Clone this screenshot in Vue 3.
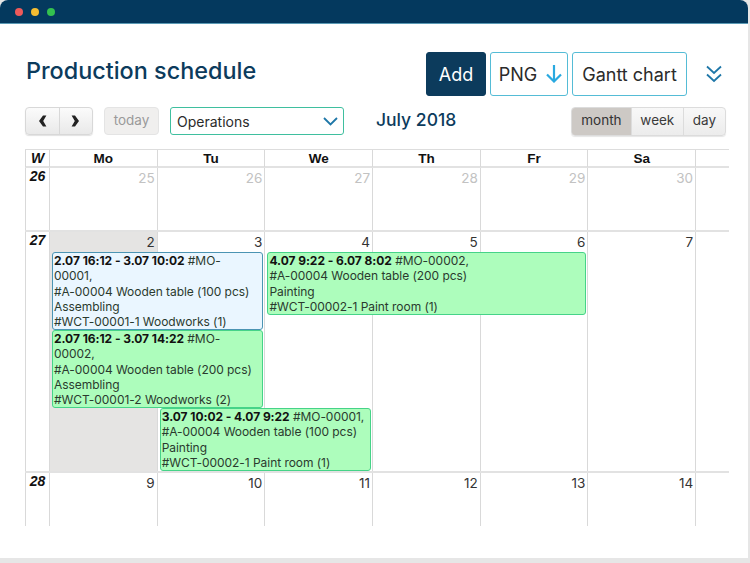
<script setup>
const days = ["Mo", "Tu", "We", "Th", "Fr", "Sa"];
const week26 = ["25", "26", "27", "28", "29", "30"];
const week27 = ["2", "3", "4", "5", "6", "7"];
const week28 = ["9", "10", "11", "12", "13", "14"];

const events = [
  {
    time: "2.07 16:12 - 3.07 10:02",
    order: "#MO-00001,",
    lines: ["#A-00004 Wooden table (100 pcs)", "Assembling", "#WCT-00001-1 Woodworks (1)"],
    cls: "ev-a",
  },
  {
    time: "4.07 9:22 - 6.07 8:02",
    order: "#MO-00002,",
    lines: ["#A-00004 Wooden table (200 pcs)", "Painting", "#WCT-00002-1 Paint room (1)"],
    cls: "ev-b",
  },
  {
    time: "2.07 16:12 - 3.07 14:22",
    order: "#MO-00002,",
    lines: ["#A-00004 Wooden table (200 pcs)", "Assembling", "#WCT-00001-2 Woodworks (2)"],
    cls: "ev-c",
  },
  {
    time: "3.07 10:02 - 4.07 9:22",
    order: "#MO-00001,",
    lines: ["#A-00004 Wooden table (100 pcs)", "Painting", "#WCT-00002-1 Paint room (1)"],
    cls: "ev-d",
  },
];
</script>

<template>
  <div class="page">
    <div class="window">
      <div class="titlebar">
        <span class="dot red"></span>
        <span class="dot yellow"></span>
        <span class="dot green"></span>
      </div>

      <div class="content">
        <div class="head">
          <h1>Production schedule</h1>
          <div class="actions">
            <button class="btn add">Add</button>
            <button class="btn png">
              PNG
              <svg width="16" height="18" viewBox="0 0 16 18" fill="none" stroke="#29a9e0" stroke-width="2.2">
                <path d="M8 0v16.500M1 9.500l7 7 7-7" />
              </svg>
            </button>
            <button class="btn gantt">Gantt chart</button>
            <svg class="collapse" width="16" height="18" viewBox="0 0 16 18" fill="none" stroke="#1f77a8" stroke-width="1.8">
              <path d="M1 1.500 8 8l7-6.500M1 9.500 8 16l7-6.500" />
            </svg>
          </div>
        </div>

        <div class="toolbar">
          <div class="pager">
            <button class="pg">
              <svg width="9" height="12" viewBox="0 0 9 12"><path d="M5 0.500h3.400L5.200 6l3.200 5.500H5L1 6z" fill="#222" /></svg>
            </button>
            <button class="pg">
              <svg width="9" height="12" viewBox="0 0 9 12"><path d="M4 0.500H0.600L3.800 6 0.600 11.500H4L8 6z" fill="#222" /></svg>
            </button>
          </div>
          <button class="today">today</button>
          <div class="select">
            <span>Operations</span>
            <svg width="15" height="9" viewBox="0 0 15 9" fill="none" stroke="#1f77a8" stroke-width="1.800">
              <path d="M1 1l6.500 6.500L14 1" />
            </svg>
          </div>
          <div class="month">July 2018</div>
          <div class="views">
            <span class="view active">month</span>
            <span class="view">week</span>
            <span class="view">day</span>
          </div>
        </div>

        <div class="calendar">
          <div class="row header">
            <div class="cell wk">W</div>
            <div v-for="d in days" :key="d" class="cell">{{ d }}</div>
            <div class="cell last"></div>
          </div>

          <div class="row r26">
            <div class="cell wk">26</div>
            <div v-for="d in week26" :key="d" class="cell num muted">{{ d }}</div>
            <div class="cell last"></div>
          </div>

          <div class="row r27">
            <div class="cell wk span">27</div>
            <div class="cell span today-bg"></div>
            <div v-for="n in 5" :key="n" class="cell span" :style="{ gridColumn: n + 2 }"></div>
            <div class="cell span last"></div>
            <div
              v-for="(d, i) in week27"
              :key="d"
              class="num date"
              :style="{ gridColumn: i + 2 }"
            >{{ d }}</div>
            <div v-for="e in events" :key="e.time" class="event" :class="e.cls">
              <b>{{ e.time }}</b> {{ e.order }}
              <div v-for="l in e.lines" :key="l">{{ l }}</div>
            </div>
          </div>

          <div class="row r28">
            <div class="cell wk">28</div>
            <div v-for="d in week28" :key="d" class="cell num">{{ d }}</div>
            <div class="cell last"></div>
          </div>
        </div>
      </div>
    </div>
  </div>
</template>

<style scoped>
.page {
  width: 750px;
  height: 563px;
  background: #e6e6e6;
  overflow: hidden;
  font-family: Inter, "Liberation Sans", sans-serif;
  color: #222;
}
.window {
  width: 748px;
  height: 558px;
  background: #fff;
  border-radius: 8px 8px 0 0;
  overflow: hidden;
}
.titlebar {
  height: 23px;
  background: #04395e;
  border-bottom: 1px solid #5a9ab5;
  display: flex;
  align-items: center;
  gap: 8px;
  padding-left: 15px;
  box-sizing: content-box;
}
.dot {
  width: 8px;
  height: 8px;
  border-radius: 50%;
}
.red { background: #ee5a5a; }
.yellow { background: #f5bd32; }
.green { background: #34c14f; }

.content {
  padding: 28px 0 0 25px;
}
.head {
  display: flex;
  justify-content: space-between;
  height: 44px;
}
h1 {
  margin: 5px 0 0 1px;
  font-size: 23.4px;
  line-height: 28px;
  font-weight: 500;
  color: #0c3b5c;
}
.actions {
  display: flex;
  align-items: center;
  gap: 4px;
  padding-right: 26px;
}
.btn {
  height: 44px;
  box-sizing: border-box;
  border: 1.5px solid #55bcd6;
  border-radius: 3px;
  background: #fff;
  font: inherit;
  font-size: 18px;
  color: #2b2b2b;
  padding: 0;
}
.add {
  width: 60px;
  background: #0c3b5c;
  border-color: #0c3b5c;
  color: #fff;
}
.png {
  width: 78px;
  display: flex;
  align-items: center;
  justify-content: center;
  gap: 9px;
  padding-left: 3px;
}
.gantt {
  width: 115px;
}
.collapse {
  margin-left: 15px;
}

.toolbar {
  display: flex;
  align-items: center;
  height: 30px;
  margin-top: 10px;
}
.pager {
  display: flex;
  width: 68px;
  height: 28px;
  border: 1px solid #d8d8d8;
  border-radius: 4px;
  box-sizing: border-box;
  background: linear-gradient(#fbfbfb, #e9e9e9);
  box-shadow: 0 1px 1px rgba(0, 0, 0, 0.12);
}
.pg {
  flex: 1;
  border: 0;
  background: none;
  padding: 0;
  display: flex;
  align-items: center;
  justify-content: center;
}
.pg + .pg {
  border-left: 1px solid #d8d8d8;
}
.today {
  width: 55px;
  height: 28px;
  margin-left: 11px;
  border: 1px solid #e4e4e4;
  border-radius: 4px;
  background: #f0efee;
  font: inherit;
  font-size: 13.5px;
  color: #9a9a9a;
  padding: 0 0 2px;
}
.select {
  width: 174px;
  height: 28px;
  margin-left: 11px;
  box-sizing: border-box;
  border: 1.5px solid #3fbf9f;
  border-radius: 3px;
  display: flex;
  align-items: center;
  justify-content: space-between;
  padding: 0 5px 0 6px;
  font-size: 14px;
  color: #2b2b2b;
}
.month {
  margin-left: 32px;
  font-size: 17.5px;
  font-weight: 500;
  color: #0c3b5c;
  width: 195px;
  padding-bottom: 4px;
}
.views {
  display: flex;
  height: 29px;
  width: 155px;
  box-sizing: border-box;
  border: 1px solid #dcdcdc;
  border-radius: 4px;
  overflow: hidden;
  background: linear-gradient(#f8f8f8, #ececec);
  font-size: 13.5px;
  color: #3a3a3a;
  box-shadow: 0 1px 1px rgba(0, 0, 0, 0.1);
}
.view {
  display: flex;
  align-items: center;
  justify-content: center;
  padding-bottom: 2px;
  width: 52px;
  border-left: 1px solid #dcdcdc;
}
.view:first-child {
  width: 60px;
  border-left: 0;
}
.view:last-child {
  width: 42px;
}
.view.active {
  background: #cdc9c5;
  color: #333;
}

.calendar {
  width: 704px;
  height: 377px;
  margin-top: 13px;
  overflow: hidden;
  border-top: 1px solid #ddd;
  box-sizing: border-box;
}
.row {
  display: grid;
  grid-template-columns: 25px repeat(6, 107.7px) 1fr;
  border-bottom: 2px solid #e2e2e2;
  box-sizing: border-box;
}
.cell {
  border-right: 1px solid #d9d9d9;
  box-sizing: border-box;
  min-width: 0;
}
.cell.last {
  border-right: 0;
}
.cell:first-child {
  border-left: 1px solid #d9d9d9;
}
.header {
  height: 18px;
  font: bold 13.5px/17px "Liberation Sans", sans-serif;
  text-align: center;
  color: #111;
}
.wk {
  font: italic bold 14px/17px "Liberation Sans", sans-serif;
  text-align: center;
  color: #111;
}
.num {
  font-size: 13.5px;
  line-height: 20px;
  text-align: right;
  padding-right: 2px;
  color: #333;
}
.muted {
  color: #c2c2c2;
}
.r26 {
  height: 64px;
}
.r27 {
  height: 241px;
  grid-template-rows: 20px 78px 78px 1fr;
}
.r28 {
  height: 60px;
  border-bottom: 0;
}
.span {
  grid-row: 1 / -1;
}
.wk.span {
  grid-column: 1;
}
.today-bg {
  grid-column: 2;
  background: #e5e4e3;
}
.cell.last.span {
  grid-column: 8;
}
.date {
  grid-row: 1;
  padding-right: 3px;
}
.event {
  z-index: 1;
  margin: 0 2px;
  padding: 0 1px;
  border: 1px solid #46d388;
  border-radius: 3px;
  background: #adfdbc;
  font-size: 12px;
  line-height: 15.300px;
  color: #2a3a2e;
  letter-spacing: -0.05px;
  box-sizing: border-box;
  overflow: hidden;
}
.event b {
  color: #111;
  font-weight: 700;
}
.ev-a {
  grid-column: 2 / span 2;
  grid-row: 2;
  height: 78px;
  padding-right: 8px;
  background: #eaf6ff;
  border-color: #4b94b3;
}
.ev-b {
  grid-column: 4 / span 3;
  grid-row: 2;
  height: 63px;
}
.ev-c {
  grid-column: 2 / span 2;
  grid-row: 3;
  height: 78px;
  padding-right: 8px;
}
.ev-d {
  grid-column: 3 / span 2;
  grid-row: 4;
  height: 63px;
}
</style>

<style>
html,
body {
  margin: 0;
  background: #e6e6e6;
}
</style>
